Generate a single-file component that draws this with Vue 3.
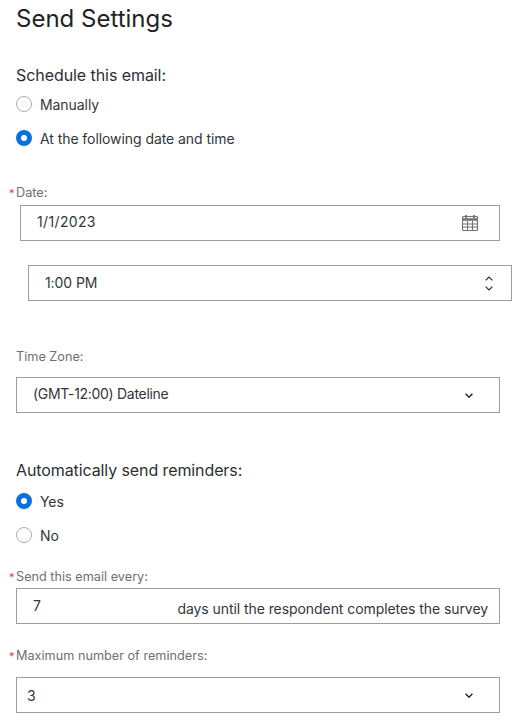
<script setup>
import { ref } from 'vue'

const schedule = ref('date')
const reminders = ref('yes')
</script>

<template>
  <div class="page">
    <h1 class="title">Send Settings</h1>

    <p class="group-label schedule-label">Schedule this email:</p>
    <div class="radio-row" @click="schedule = 'manual'">
      <span class="radio" :class="{ on: schedule === 'manual' }"></span>
      <span>Manually</span>
    </div>
    <div class="radio-row" @click="schedule = 'date'">
      <span class="radio" :class="{ on: schedule === 'date' }"></span>
      <span>At the following date and time</span>
    </div>

    <label class="field-label required date-label">Date:</label>
    <div class="box date-box">
      <span class="date-value">1/1/2023</span>
      <svg width="16" height="16" viewBox="0 0 16 16" fill="none" stroke="#6f7377" stroke-width="1.1">
        <rect x="0.5" y="1.5" width="15" height="14" rx="1" />
        <path d="M0.5 4.5h15" stroke-width="2.6" />
        <path d="M4 0v3M12 0v3" stroke-width="1.8" />
        <path d="M0.5 9h15M0.5 12h15M5.5 6v9.5M10.5 6v9.5" />
      </svg>
    </div>

    <div class="box time-box">
      <span class="time-value">1:00 PM</span>
      <svg width="8" height="15" viewBox="0 0 8 15" fill="none" stroke="#2a2e33" stroke-width="1.2">
        <path d="M0.6 4.4 4 1l3.4 3.4" />
        <path d="M0.6 10.6 4 14l3.4-3.4" />
      </svg>
    </div>

    <label class="field-label zone-label">Time Zone:</label>
    <div class="box select-box zone-box">
      <span class="zone-value">(GMT-12:00) Dateline</span>
      <svg width="8" height="5" viewBox="0 0 8 5" fill="none" stroke="#1f2327" stroke-width="1.4">
        <path d="M0.6 0.8 4 4.2l3.4-3.4" />
      </svg>
    </div>

    <p class="group-label auto-label">Automatically send reminders:</p>
    <div class="radio-row" @click="reminders = 'yes'">
      <span class="radio" :class="{ on: reminders === 'yes' }"></span>
      <span>Yes</span>
    </div>
    <div class="radio-row" @click="reminders = 'no'">
      <span class="radio" :class="{ on: reminders === 'no' }"></span>
      <span>No</span>
    </div>

    <label class="field-label required every-label">Send this email every:</label>
    <div class="box every-box">
      <span class="num">7</span>
      <span class="suffix">days until the respondent completes the survey</span>
    </div>

    <label class="field-label required max-label">Maximum number of reminders:</label>
    <div class="box select-box max-box">
      <span>3</span>
      <svg width="8" height="5" viewBox="0 0 8 5" fill="none" stroke="#1f2327" stroke-width="1.4">
        <path d="M0.6 0.8 4 4.2l3.4-3.4" />
      </svg>
    </div>
  </div>
</template>

<style scoped>
.page {
  width: 522px;
  height: 721px;
  overflow: hidden;
  box-sizing: border-box;
  padding-left: 16px;
  font-family: Inter, "Noto Sans", sans-serif;
  font-size: 14px;
  letter-spacing: -0.07px;
  color: #32363a;
  background: #fff;
}

.title {
  margin: 0;
  padding-top: 5px;
  font-size: 24px;
  line-height: 28px;
  font-weight: 400;
  letter-spacing: 0;
  color: #1f2327;
}

.group-label {
  margin: 0;
  font-size: 16px;
  line-height: 20px;
  color: #2b2f33;
}

.schedule-label {
  margin-top: 32px;
  margin-bottom: 2px;
}

.auto-label {
  margin-top: 47px;
  margin-bottom: 4px;
  letter-spacing: -0.1px;
}

.radio-row {
  display: flex;
  align-items: center;
  gap: 8px;
  height: 34px;
  cursor: pointer;
}

.radio {
  width: 16px;
  height: 16px;
  box-sizing: border-box;
  border: 1px solid #a9adb1;
  border-radius: 50%;
  background: #fff;
}

.radio.on {
  border: 5px solid #0b6fe0;
}

.field-label {
  display: block;
  position: relative;
  font-size: 12.7px;
  line-height: 16px;
  letter-spacing: 0;
  color: #6b7075;
}

.required::before {
  content: "*";
  position: absolute;
  left: -7px;
  top: 0;
  font-size: 11px;
  color: #e0452c;
}

.date-label {
  margin-top: 30px;
}

.zone-label {
  margin-top: 48px;
}

.every-label {
  margin-top: 17px;
}

.max-label {
  margin-top: 24px;
}

.box {
  display: flex;
  align-items: center;
  justify-content: space-between;
  box-sizing: border-box;
  height: 36px;
  border: 1px solid #9a9ea3;
  background: #fff;
}

.date-box {
  width: 480px;
  margin: 4px 0 0 4px;
  padding: 0 21px 0 16px;
}

.date-value {
  margin-top: -3px;
  letter-spacing: 0.35px;
}

.time-box {
  width: 484px;
  margin: 24px 0 0 12px;
  padding: 0 18px 0 16px;
}

.time-value {
  margin-top: -2px;
}

.select-box {
  width: 484px;
}

.zone-box {
  margin-top: 12px;
  padding: 0 26px 0 16px;
}

.zone-value {
  margin-top: -4px;
  letter-spacing: -0.3px;
}

.every-box {
  width: 484px;
  margin-top: 3px;
  padding: 0 11px 0 16px;
}

.num {
  margin-top: -2px;
}

.suffix {
  margin-top: 4px;
}

.max-box {
  margin-top: 13px;
  padding: 0 26px 0 10px;
}
</style>
